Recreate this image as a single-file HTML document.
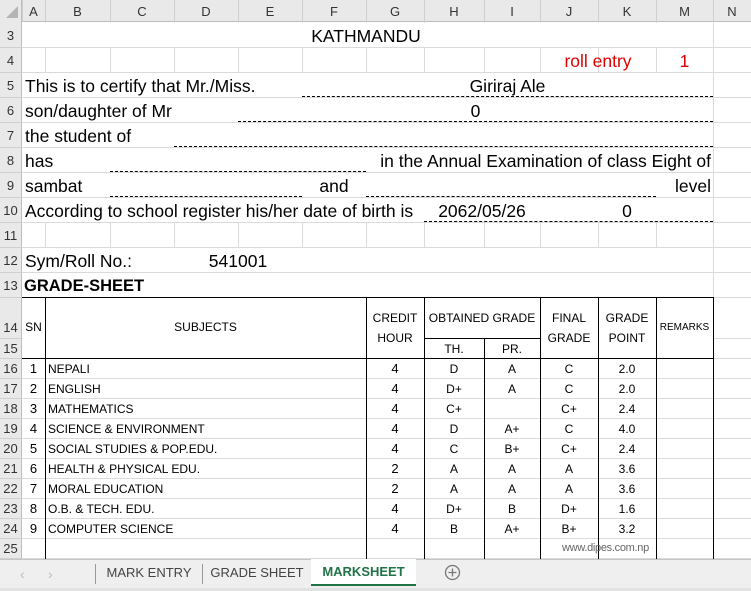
<!DOCTYPE html><html><head><meta charset="utf-8"><style>
body{margin:0;width:751px;height:591px;overflow:hidden;background:#fff;font-family:"Liberation Sans",sans-serif;position:relative}
div{position:absolute;box-sizing:border-box}
.t{white-space:nowrap;color:#000}
</style></head><body>
<script>
var H='';
function d(x,y,w,h,s){H+='<div style="left:'+x+'px;top:'+y+'px;width:'+w+'px;height:'+h+'px;'+(s||'')+'"></div>';}
function t(x,y,w,h,txt,s){H+='<div class="t" style="left:'+x+'px;top:'+y+'px;width:'+w+'px;height:'+h+'px;line-height:'+h+'px;'+(s||'')+'">'+txt+'</div>';}
var cols=[22,45,110,174,238,302,366,424,484,540,598,656,713,751];
var names=['A','B','C','D','E','F','G','H','I','J','K','M','N'];
var rows=[];
var y=22;for(var r=3;r<=13;r++){rows.push([r,y,y+25]);y+=25;}
rows.push([14,297,338]);rows.push([15,338,358]);y=358;for(r=16;r<=25;r++){rows.push([r,y,y+20]);y+=20;}
rows.push(['',558,562]);
var G='#dadada';
for(var i=1;i<cols.length;i++)d(cols[i],22,1,538,'background:'+G);
for(i=0;i<rows.length;i++)d(22,rows[i][2],729,1,'background:'+G);
d(23,23,690,24,'background:#fff');
for(var rr=5;rr<=13;rr++){var yy=22+(rr-3)*25;if(rr!=4&&rr!=11)d(23,yy+1,690,24,'background:#fff');}
d(23,297,690,263,'background:#fff');
for(r=16;r<=25;r++)d(22,358+(r-16)*20+20,691,1,'background:'+G);
d(0,0,751,22,'background:#e9e9e9;border-bottom:1px solid #bdbdbd');
d(0,0,22,560,'background:#e9e9e9;border-right:1px solid #bdbdbd');
H+='<svg style="position:absolute;left:5px;top:5px" width="14" height="14"><polygon points="13,1 13,13 1,13" fill="#b5b5b5"/></svg>';
for(i=0;i<names.length;i++){d(cols[i],0,1,22,'background:#cfcfcf');t(cols[i],1,cols[i+1]-cols[i],22,names[i],'text-align:center;font-size:13px;color:#333');}
for(i=0;i<rows.length;i++){d(0,rows[i][2],22,1,'background:#cfcfcf');var lb=rows[i][0];if(lb==='')continue;
 if(lb==14)t(0,318,21,20,'14','text-align:center;font-size:13px;color:#333');
 else t(0,rows[i][1]+1,21,rows[i][2]-rows[i][1],lb,'text-align:center;font-size:13px;color:#333');}
function dash(x1,x2,yb){d(x1,yb-1,x2-x1,1,'border-top:1px dashed #000');}
dash(302,713,97);dash(238,713,122);dash(174,713,147);dash(110,366,172);dash(110,302,197);dash(366,656,197);dash(424,713,222);
var F='font-size:17.5px;';
function tt(x,y,w,h,txt,s){t(x,y+2,w,h,txt,s);}
tt(302,22,128,25,'KATHMANDU','text-align:center;'+F);
tt(540,47,116,25,'roll entry','text-align:center;color:#e00000;'+F);
tt(656,47,57,25,'1','text-align:center;color:#e00000;'+F);
tt(25,72,300,25,'This is to certify that Mr./Miss.',F);
tt(302,72,411,25,'Giriraj Ale','text-align:center;'+F);
tt(25,97,300,25,'son/daughter of Mr',F);
tt(238,97,475,25,'0','text-align:center;'+F);
tt(25,122,300,25,'the student of',F);
tt(25,147,100,25,'has',F);
tt(360,147,351,25,'in the Annual Examination of class Eight of','text-align:right;'+F);
tt(25,172,100,25,'sambat',F);
tt(302,172,64,25,'and','text-align:center;'+F);
tt(656,172,55,25,'level','text-align:right;'+F);
tt(25,197,400,25,'According to school register his/her date of birth is',F);
tt(424,197,116,25,'2062/05/26','text-align:center;'+F);
tt(598,197,58,25,'0','text-align:center;'+F);
tt(25,247,150,25,'Sym/Roll No.:',F);
tt(174,247,128,25,'541001','text-align:center;'+F);
tt(24,272,200,25,'GRADE-SHEET','font-weight:bold;font-size:16.5px');
var K='background:#000';
d(22,297,692,1,K);d(22,358,692,1,K);
[45,366,424,540,598,656,713].forEach(function(x){d(x,297,1,263,K)});
d(484,338,1,222,K);d(424,338,116,1,K);
var S='font-size:12px;text-align:center;';
t(22,297,23,61,'SN',S);t(45,297,321,61,'SUBJECTS',S);
t(366,308,58,20,'CREDIT',S);t(366,328,58,20,'HOUR',S);
t(424,308,116,20,'OBTAINED GRADE',S);t(424,339,60,20,'TH.',S);t(484,339,56,20,'PR.',S);
t(540,308,58,20,'FINAL',S);t(540,328,58,20,'GRADE',S);
t(598,308,58,20,'GRADE',S);t(598,328,58,20,'POINT',S);
t(656,297,57,61,'REMARKS','font-size:10px;text-align:center;');
var data=[['NEPALI','4','D','A','C','2.0'],['ENGLISH','4','D+','A','C','2.0'],['MATHEMATICS','4','C+','','C+','2.4'],['SCIENCE &amp; ENVIRONMENT','4','D','A+','C','4.0'],['SOCIAL STUDIES &amp; POP.EDU.','4','C','B+','C+','2.4'],['HEALTH &amp; PHYSICAL EDU.','2','A','A','A','3.6'],['MORAL EDUCATION','2','A','A','A','3.6'],['O.B. &amp; TECH. EDU.','4','D+','B','D+','1.6'],['COMPUTER SCIENCE','4','B','A+','B+','3.2']];
data.forEach(function(r,i){var yy=359+i*20;t(22,yy,23,20,i+1,'font-size:13px;text-align:center;');t(48,yy,300,20,r[0],'font-size:12px');t(366,yy,58,20,r[1],'font-size:13px;text-align:center;');t(424,yy,60,20,r[2],S);t(484,yy,56,20,r[3],S);t(540,yy,58,20,r[4],S);t(598,yy,58,20,r[5],S);});
t(562,540,120,16,'www.dipes.com.np','font-size:11px;color:#666;letter-spacing:-0.3px');
d(0,559,751,32,'background:#efefef;border-top:1px solid #c6c6c6');
t(20,562,12,24,'&#8249;','color:#bbb;font-size:14px');t(48,562,12,24,'&#8250;','color:#bbb;font-size:14px');
d(95,564,1,20,'background:#999');d(202,564,1,20,'background:#999');
t(96,560,106,25,'MARK ENTRY','text-align:center;font-size:13px;color:#444');
t(203,560,108,25,'GRADE SHEET','text-align:center;font-size:13px;color:#444');
d(311,559,105,27,'background:#fff;border-bottom:2px solid #217346');
t(311,559,105,25,'MARKSHEET','text-align:center;font-size:13px;font-weight:bold;color:#217346');
H+='<svg style="position:absolute;left:444px;top:564px" width="17" height="17"><circle cx="8.5" cy="8.5" r="7" fill="none" stroke="#777" stroke-width="1.3"/><path d="M8.5 4.5v8M4.5 8.5h8" stroke="#777" stroke-width="1.3"/></svg>';
d(0,588,751,3,'background:#e2e2e2');
document.write(H);
</script>
</body></html>
